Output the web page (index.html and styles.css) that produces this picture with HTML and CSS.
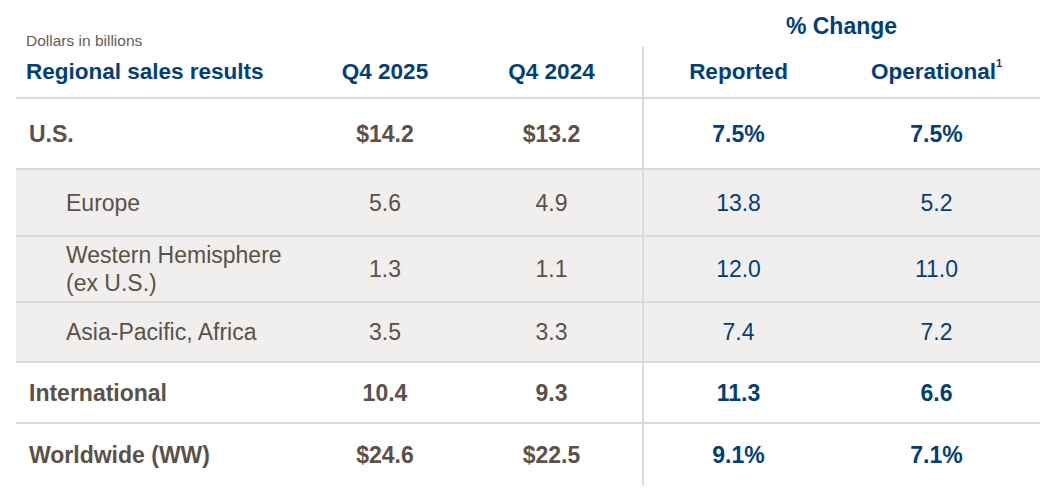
FILE: index.html
```html
<!DOCTYPE html>
<html lang="en">
<head>
<meta charset="utf-8">
<title>Regional sales results</title>
<link rel="stylesheet" href="styles.css">
</head>
<body>
<div class="wrap">
  <table class="sales">
    <colgroup>
      <col class="c-label">
      <col class="c-q25">
      <col class="c-q24">
      <col class="c-rep">
      <col class="c-op">
    </colgroup>
    <thead>
      <tr class="super">
        <th class="caption" colspan="3"><span>Dollars in billions</span></th>
        <th class="pct" colspan="2">% Change</th>
      </tr>
      <tr class="head">
        <th class="label">Regional sales results</th>
        <th>Q4 2025</th>
        <th class="q24">Q4 2024</th>
        <th class="div">Reported</th>
        <th>Operational<sup>1</sup></th>
      </tr>
    </thead>
    <tbody>
      <tr class="bold r-us">
        <td class="label">U.S.</td>
        <td>$14.2</td>
        <td class="q24">$13.2</td>
        <td class="div blue">7.5%</td>
        <td class="blue">7.5%</td>
      </tr>
      <tr class="sub r-eu">
        <td class="label">Europe</td>
        <td>5.6</td>
        <td class="q24">4.9</td>
        <td class="div blue">13.8</td>
        <td class="blue">5.2</td>
      </tr>
      <tr class="sub r-wh">
        <td class="label">Western Hemisphere<br>(ex U.S.)</td>
        <td>1.3</td>
        <td class="q24">1.1</td>
        <td class="div blue">12.0</td>
        <td class="blue">11.0</td>
      </tr>
      <tr class="sub r-ap">
        <td class="label">Asia-Pacific, Africa</td>
        <td>3.5</td>
        <td class="q24">3.3</td>
        <td class="div blue">7.4</td>
        <td class="blue">7.2</td>
      </tr>
      <tr class="bold r-in">
        <td class="label">International</td>
        <td>10.4</td>
        <td class="q24">9.3</td>
        <td class="div blue">11.3</td>
        <td class="blue">6.6</td>
      </tr>
      <tr class="bold r-ww last">
        <td class="label">Worldwide (WW)</td>
        <td>$24.6</td>
        <td class="q24">$22.5</td>
        <td class="div blue">9.1%</td>
        <td class="blue">7.1%</td>
      </tr>
    </tbody>
  </table>
</div>
</body>
</html>
```

FILE: styles.css
```css
html, body {
  margin: 0;
  padding: 0;
  background: #ffffff;
}

body {
  font-family: "Liberation Sans", Arial, sans-serif;
  color: #5b5148;
}

.wrap {
  padding-left: 16px;
  width: 1024px;
}

.sales {
  border-collapse: collapse;
  table-layout: fixed;
  width: 1024px;
}

.c-label { width: 286px; }
.c-q25 { width: 166px; }
.c-q24 { width: 175px; }
.c-rep { width: 190px; }
.c-op { width: 207px; }

.sales th,
.sales td {
  padding: 0;
  text-align: center;
  vertical-align: middle;
}

.super th {
  border: none;
}

.super .caption {
  height: 47px;
  text-align: left;
  vertical-align: bottom;
  padding-left: 10px;
}

.super .caption span {
  display: block;
  font-size: 15.5px;
  font-weight: 400;
  line-height: 16px;
  color: #665c53;
  margin-bottom: -2px;
}

.super .pct {
  height: 34px;
  vertical-align: top;
  padding-top: 13px;
  font-size: 23px;
  line-height: 26px;
  font-weight: 700;
  color: #003f7d;
}

.head th {
  height: 50px;
  font-size: 22.5px;
  font-weight: 700;
  color: #003f7d;
  border-bottom: 2px solid #dadada;
}

.head .label {
  text-align: left;
  padding-left: 10px;
}

.head sup {
  font-size: 11px;
  vertical-align: top;
  line-height: 11px;
  position: relative;
  top: -1px;
}

.sales .q24 {
  padding-right: 7px;
}

.sales .div {
  border-left: 2px solid #dcdcdc;
}

.sales td {
  font-size: 23px;
  border-bottom: 2px solid #dadada;
  line-height: 28px;
}

.sales td.label {
  text-align: left;
  padding-left: 13px;
}

.sales tr.bold td {
  font-weight: 700;
}

.sales tr.sub td {
  background: #f0efed;
  font-weight: 400;
}

.sales tr.sub td.label {
  padding-left: 50px;
}

.sales td.blue {
  color: #003f7d;
}

.r-us td { height: 69px; }
.r-eu td { height: 65px; }
.r-wh td { height: 64px; }
.r-ap td { height: 58px; }
.r-in td { height: 59px; }
.r-ww td { height: 61px; border-bottom: none; }
```
